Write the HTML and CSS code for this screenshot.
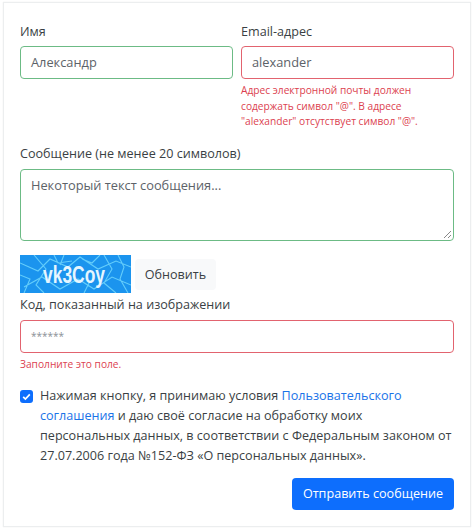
FILE: index.html
```html
<!DOCTYPE html>
<html lang="ru">
<head>
<meta charset="utf-8">
<title>Форма</title>
<link rel="stylesheet" href="styles.css">
</head>
<body>
<form class="card">
  <div class="row">
    <div class="col">
      <label class="label">Имя</label>
      <div class="control valid">Александр</div>
    </div>
    <div class="col">
      <label class="label">Email-адрес</label>
      <div class="control invalid">alexander</div>
      <div class="error">Адрес электронной почты должен содержать символ "@". В адресе "alexander" отсутствует символ "@".</div>
    </div>
  </div>
  <label class="label msg-label">Сообщение (не менее 20 символов)</label>
  <div class="control valid area">Некоторый текст сообщения...
    <svg class="grip" width="9" height="9" viewBox="0 0 9 9"><path d="M1 8 8 1M5 8 8 5" stroke="#888" stroke-width="1" fill="none"/></svg>
  </div>
  <div class="captcha-row">
    <svg class="captcha" width="111" height="38" viewBox="0 0 111 38">
      <rect width="111" height="38" fill="#1b94ee"/>
      <path d="M0 8 18 16 30 4 48 12 60 2 78 14 96 6 111 12M4 32 22 22 40 34 58 24 74 34 92 22 111 30M14 0 26 14 16 30 24 38M84 0 92 14 84 28 96 38M44 0 40 10M70 26 64 38M98 0 104 12 100 24 108 38M0 20 10 24 4 38M34 0 38 8 52 6M62 4 72 8 80 0" stroke="#63cdfb" stroke-width="1.1" fill="none"/>
      <text class="captcha-text" x="23" y="28" textLength="62" lengthAdjust="spacingAndGlyphs">vk3Coy</text>
    </svg>
    <button type="button" class="refresh">Обновить</button>
  </div>
  <label class="label code-label">Код, показанный на изображении</label>
  <div class="control invalid stars">******</div>
  <div class="error code-error">Заполните это поле.</div>
  <div class="agree">
    <span class="check"><svg width="13" height="13" viewBox="0 0 13 13"><path d="M3.2 6.8 5.4 9 9.8 4.4" stroke="#fff" stroke-width="1.7" fill="none"/></svg></span>
    <p class="agree-text">Нажимая кнопку, я принимаю условия <a class="link">Пользовательского соглашения</a> и даю своё согласие на обработку моих персональных данных, в соответствии с Федеральным законом от 27.07.2006 года №152-ФЗ «О персональных данных».</p>
  </div>
  <div class="actions"><button type="button" class="submit">Отправить сообщение</button></div>
</form>
</body>
</html>
```
FILE: styles.css
```css
* { box-sizing: border-box; }
html, body { margin: 0; background: #fff; }
body { padding: 2px 3px 3px; font-family: "Open Sans", "Noto Sans", sans-serif; font-size: 12.6px; color: #3a3f44; }
.card { height: 525px; border: 1px solid #eceeef; padding: 18px 16px 0; box-shadow: 0 0 1px #e4e6e8; }
.row { display: flex; gap: 8px; }
.col { flex: 1 1 0; min-width: 0; }
.label { display: block; line-height: 21px; height: 20px; }
.control { position: relative; margin-top: 5px; height: 33px; border: 1px solid; border-radius: 4px; padding: 0 10px; font-size: 12.8px; line-height: 31px; color: #5c6268; background: #fff; }
.valid { border-color: #6cbb85; }
.invalid { border-color: #e2636f; }
.error { margin-top: 4px; font-size: 10.2px; line-height: 15.7px; color: #dc3f50; }
.msg-label { margin-top: 13px; }
.area { height: 72px; margin-top: 6px; padding-top: 2px; line-height: 26px; }
.grip { position: absolute; right: 1px; bottom: 1px; }
.captcha-row { display: flex; align-items: center; gap: 4px; margin-top: 14px; }
.captcha { display: block; }
.captcha-text { font-family: "Liberation Sans", sans-serif; font-weight: 700; font-size: 23px; fill: #e6f6ff; }
.refresh { width: 81px; height: 31px; border: 0; border-radius: 4px; background: #f8f9fa; font: inherit; color: #3a3f44; padding: 0; }
.code-label { margin-top: 1px; }
.control.stars { margin-top: 6px; color: #8a9096; font-size: 10px; }
.code-error { margin-top: 4px; }
.agree { display: flex; gap: 7px; margin-top: 13px; }
.check { flex: none; width: 13px; height: 13px; margin-top: 4px; border-radius: 3px; background: #0d6efd; display: block; }
.check svg { display: block; }
.agree-text { margin: 0; line-height: 20px; }
.link { color: #1a73e8; }
.actions { display: flex; justify-content: flex-end; margin-top: 12px; }
.submit { width: 162px; height: 32px; border: 0; border-radius: 4px; background: #0d6efd; color: #fff; font: inherit; padding: 0; }
```
